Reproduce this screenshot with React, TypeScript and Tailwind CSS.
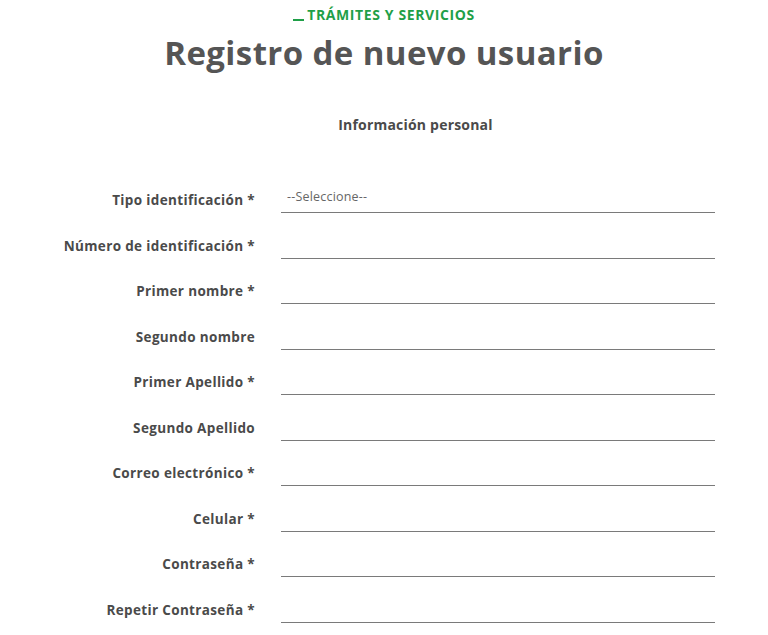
import React from "react";

const fields = [
	{ label: "Tipo identificación *", select: true },
	{ label: "Número de identificación *" },
	{ label: "Primer nombre *" },
	{ label: "Segundo nombre" },
	{ label: "Primer Apellido *" },
	{ label: "Segundo Apellido" },
	{ label: "Correo electrónico *" },
	{ label: "Celular *" },
	{ label: "Contraseña *" },
	{ label: "Repetir Contraseña *" },
];

export default function App() {
	return (
		<div className="min-h-[635px] w-[768px] bg-white font-['Open_Sans',sans-serif] text-[#4a4a4a]">
			{/* Header */}
			<div className="flex flex-col items-center pt-[5px]">
				<p className="flex h-[20px] items-end text-[14px] font-bold leading-[20px] tracking-[0.6px] text-[#1f9f48]">
					<span className="mr-[3px] mb-[4px] inline-block h-[2.5px] w-[11px] bg-[#1f9f48]" />
					TRÁMITES Y SERVICIOS
				</p>
				<h1 className="mt-[5px] text-[33px] font-bold leading-[46px] tracking-[0.4px] text-[#555555]">
					Registro de nuevo usuario
				</h1>
				<h2 className="mt-[39px] ml-[63px] text-[14px] font-bold leading-[20px] tracking-[0.2px] text-[#4a4a4a]">
					Información personal
				</h2>
			</div>

			{/* Form */}
			<div className="mt-[48px] flex flex-col gap-y-[15.5px]">
				{fields.map((field) => (
					<div key={field.label} className="flex items-center gap-x-[26px]">
						<label className="w-[255px] pt-[4px] text-right text-[13.5px] font-bold leading-[20px] tracking-[0.35px] text-[#4a4a4a]">
							{field.label}
						</label>
						<div className="flex h-[30px] w-[434px] items-center border-b-[1.5px] border-[#7a7a7a] px-[6px]">
							{field.select && (
								<span className="text-[12.5px] tracking-[0.2px] text-[#666666]">--Seleccione--</span>
							)}
						</div>
					</div>
				))}
			</div>
		</div>
	);
}
